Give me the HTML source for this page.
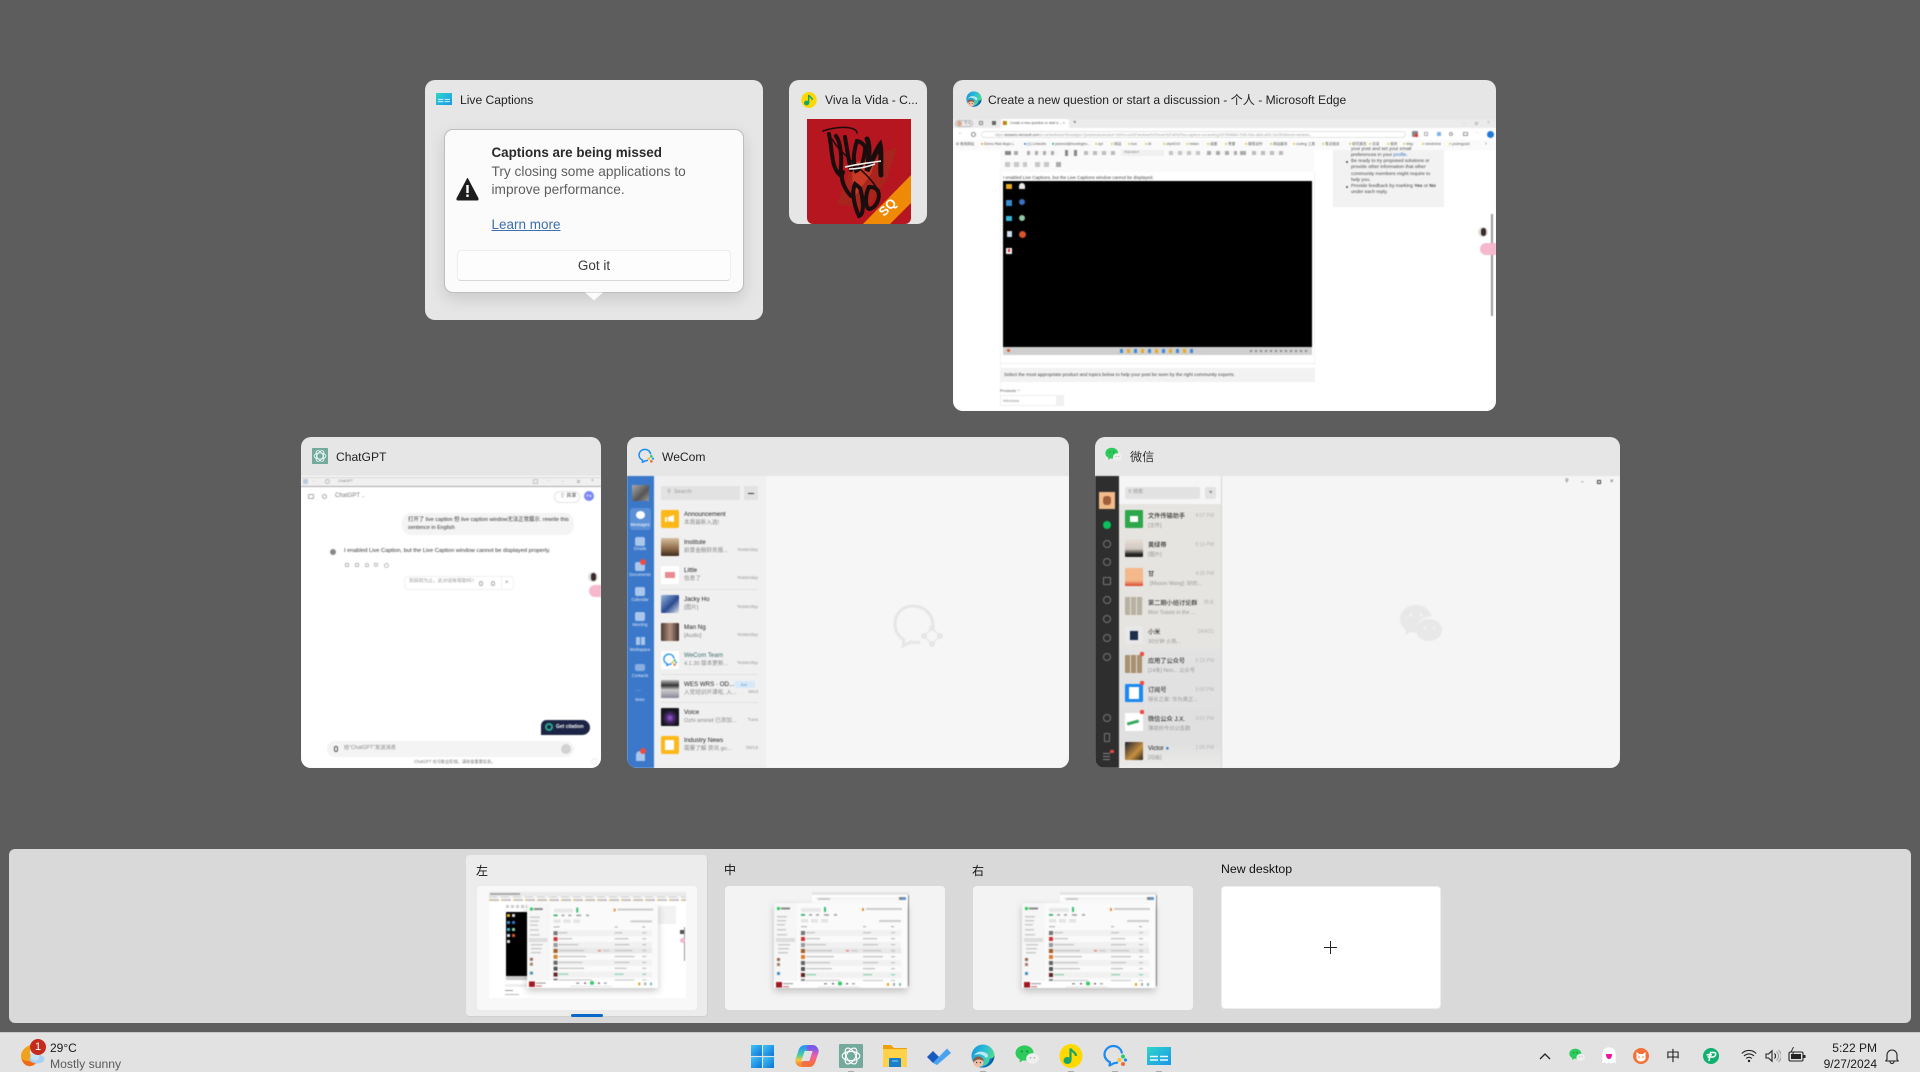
<!DOCTYPE html>
<html><head><meta charset="utf-8"><title>Task View</title>
<style>
html,body{margin:0;padding:0;width:1920px;height:1072px;overflow:hidden;background:#5d5d5d}
*{box-sizing:border-box}
body{font-family:"Liberation Sans","Noto Sans CJK SC",sans-serif;color:#111;position:relative}
.a,.t{position:absolute}
.t{white-space:nowrap;line-height:1}
.card{position:absolute;background:#e6e6e6;border-radius:10px;overflow:hidden}
.in{position:absolute;width:1920px;height:1072px}
.b{filter:blur(.42px)}
.ti{font-size:12.1px;color:#222;top:94px}
.ti2{font-size:12.1px;color:#222;top:451px}
.g{background:#c9c9c9}
.e{font-size:3.6px;color:#555}
.wn{font-size:6.2px;color:#222}
.ws{font-size:5.6px;color:#888}
.wt{font-size:4.8px;color:#999}
.wl{font-size:4.2px;color:#dfe9f7;width:24px;left:628px;text-align:center}
.wi{position:absolute;left:635px;width:10px;height:9px;background:#a9c6ec;border-radius:2px}
.av{position:absolute;width:18px;height:18px;border-radius:1px}
.xn{font-size:6.2px;color:#111;left:1148px}
.xs{font-size:5.3px;color:#999;left:1148px}
.xt{font-size:5px;color:#b5b5b5}
.xi{position:absolute;left:1103px;width:8px;height:8px;border:1px solid #777;border-radius:50%}
.rd{position:absolute;width:4px;height:4px;background:#f04a42;border-radius:1px}
.thumb{position:absolute;top:886px;height:124px;background:#f3f3f3;border-radius:4px;overflow:hidden}
.pip{position:absolute;top:1071px;width:6px;height:1px;background:#aaa}
</style></head><body>

<svg width="0" height="0" style="position:absolute">
<defs>
<linearGradient id="gwin" x1="0" y1="0" x2="1" y2="1"><stop offset="0" stop-color="#42c4f8"/><stop offset="1" stop-color="#0b74d6"/></linearGradient>
<linearGradient id="gcap" x1="0" y1="0" x2="1" y2="1"><stop offset="0" stop-color="#2fd6c8"/><stop offset="1" stop-color="#1a96ea"/></linearGradient>
<linearGradient id="gedge" x1="0" y1="0" x2="1" y2=".4"><stop offset="0" stop-color="#1590d8"/><stop offset=".55" stop-color="#2bbcd8"/><stop offset="1" stop-color="#4fdb8e"/></linearGradient>
<linearGradient id="gcl" x1="0" y1="0" x2="0" y2="1"><stop offset="0" stop-color="#2a9cf0"/><stop offset=".45" stop-color="#4ccf9a"/><stop offset=".75" stop-color="#f5c83c"/><stop offset="1" stop-color="#f58a34"/></linearGradient>
<linearGradient id="gcr" x1="0" y1="1" x2="0" y2="0"><stop offset="0" stop-color="#f5703a"/><stop offset=".5" stop-color="#ee5fa8"/><stop offset="1" stop-color="#7d58ec"/></linearGradient>
</defs>
<symbol id="i-win" viewBox="0 0 24 24"><rect x="0" y="0" width="11.4" height="11.4" fill="url(#gwin)"/><rect x="12.6" y="0" width="11.4" height="11.4" fill="url(#gwin)"/><rect x="0" y="12.6" width="11.4" height="11.4" fill="url(#gwin)"/><rect x="12.6" y="12.6" width="11.4" height="11.4" fill="url(#gwin)"/></symbol>
<symbol id="i-cap" viewBox="0 0 24 18"><rect width="24" height="18" fill="url(#gcap)"/><path d="M3 9.500h8M13 9.500h8M3 13h8M13 13h8" stroke="#e8fbff" stroke-width="1.400"/></symbol>
<symbol id="i-gpt" viewBox="0 0 24 24"><rect width="24" height="24" rx="1" fill="#74aa9c"/><g fill="none" stroke="#fff" stroke-width="1.100"><ellipse cx="12" cy="12" rx="8.800" ry="4.600"/><ellipse cx="12" cy="12" rx="8.800" ry="4.600" transform="rotate(60 12 12)"/><ellipse cx="12" cy="12" rx="8.800" ry="4.600" transform="rotate(120 12 12)"/></g></symbol>
<symbol id="i-edge" viewBox="0 0 24 24"><circle cx="12" cy="12" r="11.500" fill="url(#gedge)"/><path d="M3 11.500C5 8 9 7 12.500 8 15.500 8.800 17.500 10.500 17 12.500 16.500 14 14.500 14 13.500 12.500 11 9.800 6 9.500 3 11.500z" fill="#b8e8f0"/><path d="M23.500 11C23.500 18 18 23.500 11.500 23.500 9.500 23.500 8 23 8 23 14 23 18.500 19.500 19 14.500 21 15 23 13.500 23.500 11z" fill="#0c4f9e"/><path d="M19 14.500C18.500 19.500 14 23 8 23 10 23.800 15 24 18.500 20.500 20.500 18.500 21 16 21 14.800z" fill="#1368c4"/><circle cx="7.500" cy="18" r="5.200" fill="#eebda8"/><path d="M2.300 18.500C2 13.500 5.500 12.500 7.500 12.500 10.500 12.500 13 15 12.700 17.500 11 16 10 15.500 7.500 15.500 5 15.500 3.800 17 2.300 18.500z" fill="#8a5c48"/><circle cx="5.600" cy="18.500" r=".7" fill="#442"/><circle cx="9.400" cy="18.500" r=".7" fill="#442"/></symbol>
<symbol id="i-wx" viewBox="0 0 24 24"><ellipse cx="9.500" cy="10" rx="9" ry="7.600" fill="#2ecb5c"/><path d="M5 15.500l-.5 4 4-2.500z" fill="#2ecb5c"/><circle cx="6.800" cy="8.500" r="1" fill="#148a3a"/><circle cx="12.200" cy="8.500" r="1" fill="#148a3a"/><ellipse cx="17.500" cy="15.500" rx="6.300" ry="5.300" fill="#efefef"/><circle cx="15.500" cy="14.800" r=".8" fill="#aaa"/><circle cx="19.500" cy="14.800" r=".8" fill="#aaa"/></symbol>
<symbol id="i-qq" viewBox="0 0 24 24"><ellipse cx="12" cy="12" rx="11.500" ry="12" fill="#ffd800"/><path d="M11.500 16V4.500c.8 3 5.500 3.500 5.500 7.500" fill="none" stroke="#17a56c" stroke-width="2.200"/><ellipse cx="8.500" cy="16.500" rx="4" ry="3.500" fill="#17a56c"/></symbol>
<symbol id="i-wc" viewBox="0 0 24 24"><path d="M19 9.500C18.500 5 14.500 2 10.500 2 5.500 2 1.500 5.800 1.500 10.500c0 3.500 2.500 6.500 5.500 7.700l-.5 3.300 4.500-2.300c1.500 0 2.500-.2 4-.9" fill="none" stroke="#1b8cf2" stroke-width="2.200" stroke-linejoin="round"/><circle cx="20" cy="12.500" r="2" fill="#2cc86f"/><circle cx="22.500" cy="16" r="1.600" fill="#1b8cf2"/><circle cx="20" cy="20" r="2" fill="#f46b26"/><circle cx="16.500" cy="16" r="2" fill="#f9c22d"/></symbol>
<symbol id="i-todo" viewBox="0 0 24 18"><path d="M0 10L6 4l6 6-6 6z" fill="#185abd"/><path d="M6 16L20 1.500 24 6 10 18z" fill="#4ba3f0"/></symbol>
<symbol id="i-folder" viewBox="0 0 24 22"><path d="M0 0h8l3 3h13v6H0z" fill="#ef9f0a"/><path d="M0 4h24v18H0z" fill="#ffd24a"/><path d="M7 13h10a1 1 0 0 1 1 1v8H6v-8a1 1 0 0 1 1-1z" fill="#1a7fca"/><path d="M9 16h6" stroke="#8fd0f7" stroke-width="1"/></symbol>
<symbol id="i-cop" viewBox="0 0 24 24"><path d="M15 4H10C8 4 7 5.500 6.500 7L3.500 16C3 18 4.500 20 6.500 20H10" fill="none" stroke="url(#gcl)" stroke-width="6" stroke-linecap="round"/><path d="M9.500 20H14C16 20 17 18.500 17.500 17L20.500 8C21 6 19.500 4 17.500 4H14.500" fill="none" stroke="url(#gcr)" stroke-width="6" stroke-linecap="round"/></symbol>
<symbol id="mini" viewBox="0 0 133 85">
<rect width="133" height="85" fill="#fafafa"/><rect width="23" height="78" fill="#f6f6f6"/>
<rect x="3" y="4" width="3" height="3" fill="#2ecb5c"/><rect x="7" y="4.500" width="9" height="2" fill="#888"/>
<g fill="#ccc"><rect x="3" y="13" width="10" height="1.500"/><rect x="3" y="17" width="9" height="1.500"/><rect x="3" y="21" width="8" height="1.500"/><rect x="3" y="26" width="9" height="1.500"/><rect x="3" y="31" width="10" height="1.500"/></g>
<rect x="2" y="35" width="19" height="4" fill="#ddd"/><g fill="#ccc"><rect x="4" y="41" width="12" height="1.500"/><rect x="4" y="45" width="11" height="1.500"/><rect x="4" y="49" width="10" height="1.500"/></g>
<rect x="3" y="55" width="3" height="3" fill="#9a6a4c"/><rect x="3" y="60" width="3" height="3" fill="#a9806a"/><rect x="3" y="69" width="3" height="3" fill="#4a90b8"/>
<rect x="27" y="5" width="20" height="4" rx="2" fill="#e8e8e8"/><rect x="50" y="4" width="2" height="5" fill="#38c070"/>
<rect x="88" y="5" width="2" height="3" fill="#e8913c"/><rect x="92" y="5" width="36" height="2" fill="#ccc"/>
<rect x="27" y="11" width="4" height="1.800" fill="#38b070"/><g fill="#aaa"><rect x="35" y="11" width="3" height="1.800"/><rect x="42" y="11" width="3" height="1.800"/><rect x="50" y="11" width="5" height="1.800"/><rect x="60" y="11" width="3" height="1.800"/></g>
<g fill="#e4e4e4"><rect x="27" y="16" width="7" height="3.500"/><rect x="37" y="16" width="7" height="3.500"/><rect x="47" y="16" width="7" height="3.500"/></g><rect x="105" y="17" width="22" height="2" fill="#ccc"/>
<rect x="27" y="23" width="6" height="1.300" fill="#bbb"/><rect x="89" y="23" width="3" height="1.300" fill="#bbb"/><rect x="117" y="23" width="3" height="1.300" fill="#bbb"/>
<g fill="#f1f1f1"><rect x="26" y="27" width="101" height="6"/><rect x="26" y="39" width="101" height="6"/><rect x="26" y="45" width="101" height="5.500" fill="#e9e9e9"/><rect x="26" y="57" width="101" height="6"/><rect x="26" y="69" width="101" height="6"/></g>
<rect x="27" y="28" width="4" height="4" fill="#777"/><rect x="27" y="34" width="4" height="4" fill="#c33"/><rect x="27" y="40" width="4" height="4" fill="#999"/><rect x="27" y="46" width="4" height="4" fill="#a55a2a"/><rect x="27" y="52" width="4" height="4" fill="#d88030"/><rect x="27" y="58" width="4" height="4" fill="#666"/><rect x="27" y="64" width="4" height="4" fill="#555"/><rect x="27" y="70" width="4" height="4" fill="#622"/><rect x="27" y="76" width="4" height="3" fill="#888"/>
<g fill="#c4c4c4"><rect x="32" y="29" width="9" height="1.300"/><rect x="32" y="35" width="14" height="1.300"/><rect x="32" y="41" width="20" height="1.300"/><rect x="32" y="47" width="26" height="1.300"/><rect x="32" y="53" width="28" height="1.300"/><rect x="32" y="59" width="24" height="1.300"/><rect x="32" y="65" width="26" height="1.300"/><rect x="32" y="71" width="10" height="1.300" fill="#8cd4b0"/><rect x="32" y="77" width="34" height="1.300"/>
<rect x="89" y="29" width="8" height="1.300"/><rect x="89" y="35" width="14" height="1.300"/><rect x="89" y="41" width="15" height="1.300"/><rect x="89" y="47" width="18" height="1.300"/><rect x="89" y="53" width="20" height="1.300"/><rect x="89" y="59" width="15" height="1.300"/><rect x="89" y="65" width="12" height="1.300"/><rect x="89" y="71" width="9" height="1.300" fill="#8cd4b0"/><rect x="89" y="77" width="20" height="1.300"/>
<rect x="117" y="29" width="4" height="1.300"/><rect x="117" y="35" width="4" height="1.300"/><rect x="117" y="41" width="4" height="1.300"/><rect x="117" y="47" width="4" height="1.300"/><rect x="117" y="53" width="4" height="1.300"/><rect x="117" y="59" width="4" height="1.300"/><rect x="117" y="65" width="4" height="1.300"/><rect x="117" y="71" width="4" height="1.300" fill="#8cd4b0"/><rect x="117" y="77" width="4" height="1.300"/></g>
<rect x="72" y="47" width="3" height="1.500" fill="#ea8080"/><rect x="77" y="47" width="7" height="1.500" fill="#ccc"/>
<rect y="78" width="133" height="7" fill="#fff"/><rect x="2" y="79" width="6" height="5.500" fill="#a01820"/><rect x="9" y="80" width="10" height="1.300" fill="#aaa"/><rect x="9" y="83" width="6" height="1.300" fill="#c88"/>
<circle cx="66" cy="80.500" r="2" fill="#2ecb5c"/><rect x="50" y="80" width="3" height="1.500" fill="#999"/><rect x="58" y="80" width="2" height="1.500" fill="#666"/><rect x="72" y="80" width="2" height="1.500" fill="#666"/><rect x="78" y="80" width="3" height="1.500" fill="#aaa"/><rect x="44" y="83.500" width="42" height=".8" fill="#ddd"/>
<rect x="113" y="80" width="2" height="3" fill="#e8a020"/><rect x="119" y="80" width="2" height="3" fill="#aaa"/><rect x="125" y="80" width="2" height="3" fill="#7ba"/>
</symbol>
</svg>

<!-- Live Captions -->
<div class="card" style="left:425px;top:80px;width:338px;height:240px"><div class="in" style="left:-425px;top:-80px">
<svg class="a" style="left:436px;top:93px" width="16" height="12"><use href="#i-cap"/></svg>
<div class="t ti" style="left:460px">Live Captions</div>
<div class="a" style="left:444px;top:129px;width:300px;height:164px;background:#fbfbfb;border:1px solid #bdbdbd;border-radius:9px;box-shadow:0 6px 16px rgba(0,0,0,.13)"></div>
<svg class="a" style="left:585px;top:292px" width="18" height="9"><path d="M0 .5L9 8.500 18 .5z" fill="#fbfbfb"/></svg>
<svg class="a" style="left:456px;top:177px" width="23" height="24" viewBox="0 0 23 24"><path d="M11.500 1.500L22 21.500a1 1 0 0 1-1 1.500H2a1 1 0 0 1-1-1.500z" fill="#1c1c1c" stroke="#1c1c1c" stroke-linejoin="round"/><rect x="10.300" y="8" width="2.400" height="8" fill="#fff"/><rect x="10.300" y="17.500" width="2.400" height="2.400" fill="#fff"/></svg>
<div class="t" style="left:491.500px;top:145.500px;font-size:13.400px;font-weight:bold;color:#2a2a2a">Captions are being missed</div>
<div class="t" style="left:491.500px;top:165px;font-size:13.700px;color:#5e5e5e">Try closing some applications to</div>
<div class="t" style="left:491.500px;top:183px;font-size:13.700px;color:#5e5e5e">improve performance.</div>
<div class="t" style="left:491.500px;top:218px;font-size:13.500px;color:#3d6ead;text-decoration:underline">Learn more</div>
<div class="a" style="left:457px;top:250px;width:274px;height:31px;background:#fdfdfd;border:1px solid #ededed;border-bottom-color:#d8d8d8;border-radius:4px;text-align:center;font-size:13.500px;line-height:29px;color:#3a3a3a">Got it</div>
</div></div>

<!-- Viva -->
<div class="card" style="left:789px;top:80px;width:138px;height:144px"><div class="in" style="left:-789px;top:-80px">
<svg class="a" style="left:801px;top:92px" width="16" height="16"><use href="#i-qq"/></svg>
<div class="t ti" style="left:825px">Viva la Vida - C...</div>
<svg class="a" style="left:807px;top:119px;border-radius:0 0 6px 6px" width="104" height="105" viewBox="0 0 104 105">
<rect width="104" height="105" fill="#b5161f"/>
<path d="M45 45L90 28 80 60 60 90 30 85z" fill="#a8241c"/><path d="M45 45l25-10-6 20-18 25z" fill="#c83a26"/>
<g fill="none" stroke="#1a0d0d" stroke-linecap="round"><path d="M22 15C26 35 24 48 33 56 36 38 33 22 29 17" stroke-width="4"/><path d="M38 18c2 12 4 26 6 33M50 22c-4 12-4 22-1 30 5-2 9-12 9-24-2-4-6-6-8-6z" stroke-width="4"/><path d="M60 20c3 6 2 20 0 32 5-10 10-22 13-26 2 8 0 22 1 30" stroke-width="5"/><path d="M36 53c-4 8 4 20 8 24M48 65c-4 8 0 24 4 32 6-2 4-18 1-28zM62 68c-4 8-4 20 0 22 6 0 12-10 9-18-3-4-6-4-9-4z" stroke-width="4"/><path d="M16 12c18-6 34-4 34 2M25 20c10 18 40 36 46 52" stroke-width="1.500"/></g>
<path d="M38 48c12-3 24-4 36-6M42 50c8 0 18-2 26-5" stroke="#eee" stroke-width="1.600" fill="none"/>
<polygon points="104,56 104,84 83,105 56,105" fill="#ef8a06"/>
<text x="0" y="0" transform="translate(77 98) rotate(-45)" font-family="Liberation Sans" font-weight="bold" font-size="13" fill="#fff">SQ</text>
</svg>
</div></div>

<!-- Edge -->
<div class="card" style="left:953px;top:80px;width:543px;height:331px"><div class="in" style="left:-953px;top:-80px">
<svg class="a" style="left:966px;top:91px" width="16" height="16"><use href="#i-edge"/></svg>
<div class="t ti" style="left:988px">Create a new question or start a discussion - 个人 - Microsoft Edge</div>
<div class="b">
<div class="a" style="left:953px;top:119px;width:543px;height:292px;background:#fff"></div>
<div class="a" style="left:953px;top:119px;width:543px;height:9px;background:#ebebeb"></div>
<div class="a" style="left:955px;top:120px;width:18px;height:7px;border:1px solid #bbb;border-radius:4px"></div>
<div class="a" style="left:957px;top:121px;width:5px;height:5px;background:#d9a58e;border-radius:50%"></div><div class="t e" style="left:964px;top:122px">个人</div>
<div class="a" style="left:979px;top:121px;width:4px;height:4px;border:1px solid #888"></div><div class="a" style="left:992px;top:121px;width:4px;height:4px;background:#666"></div>
<div class="a" style="left:1001px;top:119px;width:68px;height:9px;background:#fff;border-radius:2px 2px 0 0"></div>
<div class="a" style="left:1003px;top:121px;width:4px;height:4px;background:linear-gradient(90deg,#f25022 50%,#7fba00 50%)"></div>
<div class="t e" style="left:1010px;top:122px;font-size:3.400px">Create a new question or start a ... ×</div>
<div class="t" style="left:1073px;top:120px;font-size:6px;color:#555">+</div>
<div class="t" style="left:1463px;top:121px;font-size:4px;color:#aaa">–</div><div class="a" style="left:1475px;top:122px;width:3px;height:3px;border:1px solid #bbb"></div><div class="t" style="left:1487px;top:121px;font-size:5px;color:#aaa">×</div>
<div class="a" style="left:953px;top:128px;width:543px;height:12px;background:#fff"></div>
<div class="t" style="left:958px;top:131px;font-size:5px;color:#555">←</div>
<div class="a" style="left:971px;top:132px;width:5px;height:5px;border:1px solid #888;border-radius:50%"></div>
<div class="a" style="left:981px;top:131px;width:425px;height:7px;border:1px solid #e2e2e2;border-radius:4px;background:#fff;overflow:hidden"><div class="t" style="left:13px;top:1.500px;font-size:3.300px;color:#999">https://<span style="color:#444">answers.microsoft.com</span>/en-us/newthread?threadtype=Questions&amp;cancelurl=%2Fen-us%2Fwindows%2Fforum%2Fall%2Flive-captions-not-working%2F9548864-7b95-43dc-a8c6-a9917cb23f1f&amp;forum=windows...</div></div>
<div class="a" style="left:1412px;top:131px;width:6px;height:6px;background:#888;border-radius:1px"></div><div class="a" style="left:1415px;top:134px;width:3px;height:3px;background:#e33"></div>
<div class="a" style="left:1424px;top:132px;width:4px;height:4px;border:1px solid #aaa"></div><div class="a" style="left:1437px;top:132px;width:4px;height:4px;background:#7ab4e8"></div><div class="a" style="left:1449px;top:132px;width:4px;height:4px;border:1px solid #999;border-radius:50%"></div><div class="a" style="left:1463px;top:132px;width:5px;height:4px;border:1px solid #999"></div><div class="t e" style="left:1476px;top:131px">...</div>
<div class="a" style="left:1487px;top:131px;width:7px;height:7px;border-radius:50%;background:#2179d8"></div>
<div class="a" style="left:953px;top:140px;width:543px;height:10px;background:#fafafa"></div>
<div class="t e" style="left:956px;top:143px">⊞ 常用网址</div><div class="t e" style="left:981px;top:143px"><span style="color:#e0a020">■</span> Demo Risk Bays L.</div><div class="t e" style="left:1024px;top:143px"><span style="color:#3a7ac8">■</span> (1) LinkedIn</div><div class="t e" style="left:1052px;top:143px"><span style="color:#3aa050">■</span> pwencd@bootingtro...</div><div class="t e" style="left:1095px;top:143px"><span style="color:#e8c050">■</span> epi</div><div class="t e" style="left:1111px;top:143px"><span style="color:#e8c050">■</span> 网站</div><div class="t e" style="left:1128px;top:143px"><span style="color:#e8c050">■</span> box</div><div class="t e" style="left:1145px;top:143px"><span style="color:#e8c050">■</span> AI</div><div class="t e" style="left:1163px;top:143px"><span style="color:#e8c050">■</span> clip4OOI</div><div class="t e" style="left:1186px;top:143px"><span style="color:#e8c050">■</span> miden</div><div class="t e" style="left:1207px;top:143px"><span style="color:#e8c050">■</span> 成都</div><div class="t e" style="left:1225px;top:143px"><span style="color:#e8c050">■</span> 青春</div><div class="t e" style="left:1245px;top:143px"><span style="color:#e8c050">■</span> 随笔创作</div><div class="t e" style="left:1270px;top:143px"><span style="color:#e8c050">■</span> 网站副本</div><div class="t e" style="left:1293px;top:143px"><span style="color:#e8c050">■</span> coding 工具</div><div class="t e" style="left:1322px;top:143px"><span style="color:#e8c050">■</span> 笔试相关</div><div class="t e" style="left:1349px;top:143px"><span style="color:#e8c050">■</span> 研究报告</div><div class="t e" style="left:1369px;top:143px"><span style="color:#e8c050">■</span> 目录</div><div class="t e" style="left:1387px;top:143px"><span style="color:#e8c050">■</span> 我的</div><div class="t e" style="left:1403px;top:143px"><span style="color:#e8c050">■</span> Way</div><div class="t e" style="left:1422px;top:143px"><span style="color:#e8c050">■</span> mindmind</div><div class="t e" style="left:1449px;top:143px"><span style="color:#e8c050">■</span> podmgclub</div><div class="t" style="left:1485px;top:142px;font-size:5px;color:#555">›</div>
<div class="a" style="left:1000px;top:150px;width:314px;height:22px;background:#fafafa"></div>
<div class="a" style="left:1005px;top:151px;width:6px;height:4px;background:#888"></div><div class="a" style="left:1014px;top:151px;width:4px;height:4px;background:#aaa"></div>
<div class="a" style="left:1027px;top:151px;width:32px;height:4px;background:repeating-linear-gradient(90deg,#aaa 0 3px,#f6f6f6 3px 8px)"></div><div class="a" style="left:1065px;top:150px;width:14px;height:6px;background:repeating-linear-gradient(90deg,#888 0 3px,#f6f6f6 3px 9px)"></div>
<div class="a" style="left:1084px;top:151px;width:32px;height:4px;background:repeating-linear-gradient(90deg,#bbb 0 4px,#f6f6f6 4px 9px)"></div>
<div class="a" style="left:1121px;top:150px;width:43px;height:6px;background:#f0f0f0"></div><div class="t e" style="left:1124px;top:151px;color:#888">Standard</div>
<div class="a" style="left:1169px;top:151px;width:32px;height:4px;background:repeating-linear-gradient(90deg,#c4c4c4 0 4px,#f6f6f6 4px 9px)"></div>
<div class="a" style="left:1207px;top:151px;width:30px;height:4px;background:repeating-linear-gradient(90deg,#aaa 0 4px,#f6f6f6 4px 9px)"></div>
<div class="a" style="left:1240px;top:151px;width:6px;height:4px;background:#aaa"></div>
<div class="a" style="left:1252px;top:151px;width:32px;height:4px;background:repeating-linear-gradient(90deg,#bbb 0 4px,#f6f6f6 4px 9px)"></div>
<div class="a" style="left:1005px;top:162px;width:22px;height:5px;background:repeating-linear-gradient(90deg,#c8c8c8 0 5px,#f6f6f6 5px 9px)"></div><div class="a" style="left:1035px;top:162px;width:16px;height:5px;background:repeating-linear-gradient(90deg,#c8c8c8 0 5px,#f6f6f6 5px 9px)"></div><div class="a" style="left:1056px;top:162px;width:5px;height:5px;background:#aaa"></div>
<div class="t" style="left:1003px;top:176px;font-size:4.500px;color:#444">I enabled Live Captions, but the Live Captions window cannot be displayed.</div>
<div class="a" style="left:1003px;top:181px;width:309px;height:166px;background:#000"></div>
<div class="a" style="left:1006px;top:184px;width:6px;height:5px;background:#e8a820"></div><div class="a" style="left:1019px;top:183px;width:6px;height:6px;background:#e8e8e8;border-radius:50% 50% 0 0"></div>
<div class="a" style="left:1006px;top:200px;width:6px;height:6px;background:#3a8ad0"></div><div class="a" style="left:1019px;top:199px;width:6px;height:6px;background:#3a70c0;border-radius:50%"></div>
<div class="a" style="left:1006px;top:216px;width:6px;height:5px;background:#38b4d8"></div><div class="a" style="left:1019px;top:215px;width:6px;height:6px;background:#90c8a0;border-radius:50%"></div>
<div class="a" style="left:1007px;top:231px;width:5px;height:6px;background:#cde"></div><div class="a" style="left:1019px;top:231px;width:7px;height:7px;background:#d8552a;border-radius:50%"></div>
<div class="a" style="left:1006px;top:248px;width:6px;height:6px;background:#f4f4f4"></div><div class="a" style="left:1008px;top:249px;width:2px;height:3px;background:#d22"></div>
<div class="a" style="left:1003px;top:347px;width:309px;height:8px;background:#cfcfcf"></div><div class="a" style="left:1007px;top:349px;width:3px;height:3px;background:#d8552a;border-radius:50%"></div>
<div class="a" style="left:1120px;top:349px;width:75px;height:4px;background:repeating-linear-gradient(90deg,#3a8ad0 0 3px,#cfcfcf 3px 7px,#e8a820 7px 10px,#cfcfcf 10px 14px)"></div><div class="a" style="left:1250px;top:350px;width:58px;height:2px;background:repeating-linear-gradient(90deg,#888 0 2px,#cfcfcf 2px 5px)"></div>
<div class="a" style="left:1000px;top:172px;width:1px;height:222px;background:#f3f3f3"></div><div class="a" style="left:1314px;top:172px;width:1px;height:193px;background:#f3f3f3"></div><div class="a" style="left:1000px;top:363px;width:315px;height:1px;background:#f0f0f0"></div>
<div class="a" style="left:1000px;top:368px;width:315px;height:14px;background:#f2f2f2"></div>
<div class="t" style="left:1004px;top:373px;font-size:4.700px;color:#444">Select the most appropriate product and topics below to help your post be seen by the right community experts.</div>
<div class="t e" style="left:1000px;top:389px;font-size:4px">Products: <span style="color:#c33">*</span></div>
<div class="a" style="left:1000px;top:395px;width:64px;height:11px;border:1px solid #eee"></div><div class="t e" style="left:1003px;top:399px;font-size:4px;color:#888">Windows</div><div class="a" style="left:1056px;top:395px;width:8px;height:11px;background:#f0f0f0"></div>
<div class="a" style="left:1333px;top:150px;width:111px;height:57px;background:#f2f2f2"></div>
<div class="t" style="left:1351px;top:148px;font-size:4.800px;color:#444">your post and set your email</div>
<div class="t" style="left:1351px;top:154px;font-size:4.800px;color:#444">preferences in your <span style="color:#2a70c0">profile</span>.</div>
<div class="t" style="left:1351px;top:160px;font-size:4.800px;color:#444">Be ready to try proposed solutions or</div>
<div class="t" style="left:1351px;top:166px;font-size:4.800px;color:#444">provide other information that other</div>
<div class="t" style="left:1351px;top:173px;font-size:4.800px;color:#444">community members might require to</div>
<div class="t" style="left:1351px;top:179px;font-size:4.800px;color:#444">help you.</div>
<div class="t" style="left:1351px;top:185px;font-size:4.800px;color:#444">Provide feedback by marking <b>Yes</b> or <b>No</b></div>
<div class="t" style="left:1351px;top:191px;font-size:4.800px;color:#444">under each reply.</div>
<div class="a" style="left:1346px;top:161px;width:2px;height:2px;background:#444;border-radius:50%"></div><div class="a" style="left:1346px;top:186px;width:2px;height:2px;background:#444;border-radius:50%"></div>
<div class="a" style="left:1491px;top:214px;width:2px;height:102px;background:#999"></div>
<div class="a" style="left:1478px;top:227px;width:10px;height:10px;border-radius:50%;background:#ddd"></div><div class="a" style="left:1481px;top:228px;width:5px;height:8px;border-radius:3px;background:#3a2a28"></div>
<div class="a" style="left:1480px;top:243px;width:16px;height:12px;border-radius:6px 0 0 6px;background:#f5b8cc"></div>
</div>
</div></div>

<!-- ChatGPT -->
<div class="card" style="left:301px;top:437px;width:300px;height:331px"><div class="in" style="left:-301px;top:-437px">
<svg class="a" style="left:312px;top:448px" width="16" height="16"><use href="#i-gpt"/></svg>
<div class="t ti2" style="left:336px">ChatGPT</div>
<div class="b">
<div class="a" style="left:301px;top:476px;width:300px;height:292px;background:#fff"></div>
<div class="a" style="left:301px;top:477px;width:300px;height:10px;background:#f0f0f0;border-bottom:1px solid #aaa;border-top:1px solid #d5d5d5"></div>
<div class="a" style="left:303px;top:479px;width:5px;height:5px;background:#bcd"></div><div class="t" style="left:312px;top:479px;font-size:5px;color:#aaa">←</div><div class="a" style="left:325px;top:479px;width:5px;height:5px;border:1px solid #bbb;border-radius:50%"></div><div class="t" style="left:338px;top:480px;font-size:3.600px;color:#888">ChatGPT</div>
<div class="a" style="left:533px;top:479px;width:5px;height:5px;border:1px solid #c4c4c4"></div><div class="t" style="left:547px;top:480px;font-size:3.600px;color:#999">···</div><div class="t" style="left:562px;top:480px;font-size:3.600px;color:#999">–</div><div class="a" style="left:577px;top:480px;width:3px;height:3px;border:1px solid #bbb"></div><div class="t" style="left:591px;top:479px;font-size:5px;color:#999">×</div>
<div class="a" style="left:308px;top:494px;width:6px;height:5px;border:1px solid #aaa;border-radius:1px"></div>
<div class="a" style="left:322px;top:494px;width:5px;height:5px;border:1px solid #aaa;border-radius:50%"></div>
<div class="t" style="left:335px;top:493px;font-size:6px;color:#777">ChatGPT <span style="font-size:4px">⌄</span></div>
<div class="a" style="left:554px;top:491px;width:26px;height:12px;border:1px solid #e4e4e4;border-radius:6px;background:#fff"></div><div class="t" style="left:560px;top:494px;font-size:5px;color:#333">⇧ 共享</div>
<div class="a" style="left:584px;top:491px;width:10px;height:10px;border-radius:50%;background:#7c88f5;color:#fff;font-size:4px;line-height:10px;text-align:center">Pw</div>
<div class="a" style="left:402px;top:513px;width:172px;height:22px;border-radius:9px;background:#f4f4f4"></div>
<div class="t" style="left:408px;top:518px;font-size:5.400px;color:#333">打开了 live caption 但 live caption window无法正常展示. rewrite this</div>
<div class="t" style="left:408px;top:526px;font-size:5.400px;color:#333">sentence in English</div>
<div class="a" style="left:330px;top:549px;width:6px;height:6px;border-radius:50%;background:#888"></div>
<div class="t" style="left:344px;top:549px;font-size:5.700px;color:#333">I enabled Live Caption, but the Live Caption window cannot be displayed properly.</div>
<div class="a" style="left:345px;top:563px;width:4px;height:4px;border:1px solid #bbb"></div><div class="a" style="left:355px;top:563px;width:4px;height:4px;border:1px solid #bbb"></div><div class="a" style="left:365px;top:563px;width:4px;height:4px;border:1px solid #bbb;border-radius:50% 50% 0 0"></div><div class="a" style="left:374px;top:563px;width:4px;height:4px;border:1px solid #bbb;border-radius:0 0 50% 50%"></div><div class="a" style="left:384px;top:563px;width:5px;height:5px;border:1px solid #bbb;border-radius:50%"></div>
<div class="a" style="left:404px;top:576px;width:110px;height:14px;border:1px solid #f0f0f0;border-radius:4px;background:#fff"></div>
<div class="t" style="left:409px;top:580px;font-size:4.800px;color:#999">到目前为止，此对话有帮助吗?</div>
<div class="a" style="left:479px;top:581px;width:4px;height:5px;border:1px solid #aaa;border-radius:2px"></div><div class="a" style="left:491px;top:581px;width:4px;height:5px;border:1px solid #aaa;border-radius:2px"></div><div class="a" style="left:501px;top:576px;width:1px;height:14px;background:#f0f0f0"></div><div class="t" style="left:505px;top:580px;font-size:6px;color:#888">×</div>
<div class="a" style="left:588px;top:572px;width:10px;height:10px;border-radius:50%;background:#ddd"></div><div class="a" style="left:591px;top:573px;width:5px;height:8px;border-radius:3px;background:#3a2a28"></div>
<div class="a" style="left:589px;top:585px;width:12px;height:12px;border-radius:6px 0 0 6px;background:#f5b8cc"></div>
<div class="a" style="left:541px;top:720px;width:49px;height:15px;border-radius:6px 8px 8px 0;background:#1c2545"></div>
<div class="a" style="left:545px;top:723px;width:8px;height:8px;border-radius:50%;border:2px solid #27a88a"></div>
<div class="t" style="left:556px;top:725px;font-size:5px;color:#fff;font-weight:bold">Get citation</div>
<div class="a" style="left:327px;top:741px;width:247px;height:16px;border-radius:8px;background:#f4f4f4"></div>
<div class="a" style="left:334px;top:746px;width:4px;height:6px;border:1px solid #555;border-radius:2px"></div>
<div class="t" style="left:344px;top:746px;font-size:5.300px;color:#888">给“ChatGPT”发送消息</div>
<div class="a" style="left:561px;top:744px;width:10px;height:10px;border-radius:50%;background:#d2d2d2"></div>
<div class="t" style="left:414px;top:760px;font-size:4.200px;color:#777">ChatGPT 也可能会犯错。请核查重要信息。</div>
<div class="a" style="left:591px;top:758px;width:7px;height:7px;border-radius:50%;border:1px solid #eee"></div>
</div>
</div></div>

<!-- WeCom -->
<div class="card" style="left:627px;top:437px;width:442px;height:331px"><div class="in" style="left:-627px;top:-437px">
<svg class="a" style="left:638px;top:448px" width="16" height="16"><use href="#i-wc"/></svg>
<div class="t ti2" style="left:662px">WeCom</div>
<div class="b">
<div class="a" style="left:766px;top:476px;width:303px;height:292px;background:#f6f6f6"></div>
<div class="a" style="left:654px;top:476px;width:112px;height:292px;background:#f0f0f0"></div>
<div class="a" style="left:627px;top:476px;width:27px;height:292px;background:#3b78c9"></div>
<div class="a" style="left:632px;top:485px;width:17px;height:16px;background:linear-gradient(135deg,#aaa,#555 60%,#999)"></div>
<div class="a" style="left:630px;top:508px;width:21px;height:22px;border-radius:3px;background:#5b90d6"></div>
<div class="a" style="left:636px;top:511px;width:9px;height:8px;border-radius:50%;background:#fff"></div>
<div class="t wl" style="top:523px;color:#fff">Messages</div>
<div class="wi" style="top:537px"></div><div class="t wl" style="top:547px">Emails</div>
<div class="wi" style="top:562px"></div><div class="t wl" style="top:573px">Documents</div>
<div class="a" style="left:640px;top:559px;width:6px;height:6px;border-radius:50%;background:#ef4a42"></div>
<div class="wi" style="top:587px"></div><div class="t wl" style="top:598px">Calendar</div>
<div class="wi" style="top:612px"></div><div class="t wl" style="top:623px">Meeting</div>
<div class="a" style="left:636px;top:637px;width:9px;height:8px;background:repeating-linear-gradient(90deg,#a9c6ec 0 4px,#3b78c9 4px 5px)"></div><div class="t wl" style="top:648px">Workspace</div>
<div class="wi" style="top:664px;height:7px;background:#89ade0"></div><div class="t wl" style="top:674px">Contacts</div>
<div class="t" style="left:635px;top:688px;font-size:6px;color:#cfe0f5">···</div><div class="t wl" style="top:698px">More</div>
<div class="a" style="left:636px;top:751px;width:9px;height:10px;border-radius:4px 4px 0 0;background:#a9c6ec"></div>
<div class="a" style="left:640px;top:748px;width:6px;height:6px;border-radius:50%;background:#ef4a42"></div>
<div class="a" style="left:661px;top:486px;width:79px;height:14px;background:#e2e2e2"></div>
<div class="t" style="left:667px;top:490px;font-size:5.500px;color:#999">⚲ &nbsp;Search</div>
<div class="a" style="left:744px;top:486px;width:14px;height:14px;background:#e2e2e2"></div><div class="a" style="left:748px;top:492.500px;width:6px;height:1px;background:#333"></div>

<div class="a" style="left:661px;top:589px;width:97px;height:1px;background:#e0e0e0"></div><div class="a" style="left:661px;top:674px;width:97px;height:1px;background:#e0e0e0"></div><div class="a" style="left:661px;top:702px;width:97px;height:1px;background:#e0e0e0"></div>

<div class="av" style="left:661px;top:510px;background:#fcb719;border-radius:2px"></div><svg class="a" style="left:664px;top:513px" width="12" height="12"><path d="M1 4h2v5H1zM4 4l6-2v7L4 8z" fill="#fff"/></svg>
<div class="t wn" style="left:684px;top:512px">Announcement</div><div class="t ws" style="left:684px;top:521px">本周最新入选!</div>
<div class="av" style="left:661px;top:538px;background:linear-gradient(180deg,#d9c0a0,#8a6a48 60%,#3a2a1a)"></div>
<div class="t wn" style="left:684px;top:540px">Institute</div><div class="t ws" style="left:684px;top:549px">前景金融财务报...</div><div class="t wt" style="right:1162px;top:549px">Yesterday</div>
<div class="av" style="left:661px;top:566px;background:#fff"></div><div class="a" style="left:665px;top:572px;width:10px;height:6px;background:#e88a90"></div>
<div class="t wn" style="left:684px;top:568px">Little</div><div class="t ws" style="left:684px;top:577px">信息了</div><div class="t wt" style="right:1162px;top:577px">Yesterday</div>
<div class="av" style="left:661px;top:595px;background:linear-gradient(135deg,#9ab8e0,#2a4a90 55%,#e8e8f0)"></div>
<div class="t wn" style="left:684px;top:597px">Jacky Ho</div><div class="t ws" style="left:684px;top:606px">[图片]</div><div class="t wt" style="right:1162px;top:606px">Yesterday</div>
<div class="av" style="left:661px;top:623px;background:linear-gradient(90deg,#4a3a30,#b49080 50%,#3a3028)"></div>
<div class="t wn" style="left:684px;top:625px">Man Ng</div><div class="t ws" style="left:684px;top:634px">[Audio]</div><div class="t wt" style="right:1162px;top:634px">Yesterday</div>
<div class="av" style="left:661px;top:651px;background:#fff"></div><svg class="a" style="left:663px;top:653px" width="14" height="14"><use href="#i-wc"/></svg>
<div class="t wn" style="left:684px;top:653px;color:#3a6a70">WeCom Team</div><div class="t ws" style="left:684px;top:662px">4.1.30 版本更新...</div><div class="t wt" style="right:1162px;top:662px">Yesterday</div>
<div class="av" style="left:661px;top:680px;background:linear-gradient(180deg,#bbb,#333 30%,#ccc 55%,#889)"></div>
<div class="t wn" style="left:684px;top:682px">WES WRS · OD...</div><div class="a" style="left:735px;top:681px;width:20px;height:7px;background:#d7e8f7"></div><div class="t" style="left:741px;top:683px;font-size:4px;color:#4a90d8">Ext</div><div class="t ws" style="left:684px;top:691px">入党培训开课啦, 入...</div><div class="t wt" style="right:1162px;top:691px">Wed</div>
<div class="av" style="left:661px;top:708px;background:radial-gradient(circle at 50% 55%,#a060d8 0,#4a2a70 30%,#16161c 60%)"></div>
<div class="t wn" style="left:684px;top:710px">Voice</div><div class="t ws" style="left:684px;top:719px">Ozhi aminid 已添加...</div><div class="t wt" style="right:1162px;top:719px">Tues</div>
<div class="av" style="left:661px;top:736px;background:#fcb719;border-radius:2px"></div><div class="a" style="left:665px;top:740px;width:9px;height:10px;background:#fff"></div>
<div class="t wn" style="left:684px;top:738px">Industry News</div><div class="t ws" style="left:684px;top:747px">需要了解 资讯 go...</div><div class="t wt" style="right:1162px;top:747px">09/19</div>
<svg class="a" style="left:893px;top:604px" width="50" height="46" viewBox="0 0 50 46"><path d="M40 22C40 10 31 2 20 2 9 2 2 10 2 20c0 7 4 13 9 16l-1 6 8-4c3 .8 6 .8 9 0" fill="none" stroke="#e6e6e6" stroke-width="3"/><circle cx="39" cy="24" r="3" fill="#e6e6e6"/><circle cx="31" cy="32" r="3" fill="#e6e6e6"/><circle cx="47" cy="32" r="3" fill="#e6e6e6"/><circle cx="39" cy="40" r="3" fill="#e6e6e6"/><path d="M37 26l-4 4M41 26l4 4M37 38l-4-4M41 38l4-4" stroke="#e6e6e6" stroke-width="1.500"/></svg>
</div>
</div></div>

<!-- WeChat -->
<div class="card" style="left:1095px;top:437px;width:525px;height:331px"><div class="in" style="left:-1095px;top:-437px">
<svg class="a" style="left:1105px;top:446px" width="17" height="17"><use href="#i-wx"/></svg>
<div class="t ti2" style="left:1130px;color:#333">微信</div>
<div class="b">
<div class="a" style="left:1119px;top:476px;width:501px;height:292px;background:#f5f5f5"></div>
<div class="a" style="left:1095px;top:476px;width:24px;height:292px;background:#2e2e2e"></div>
<div class="a" style="left:1099px;top:492px;width:16px;height:17px;background:#f3bb8a"></div><div class="a" style="left:1103px;top:496px;width:8px;height:9px;background:#a05f3a;border-radius:3px"></div>
<div class="a" style="left:1103px;top:521px;width:8px;height:8px;border-radius:50%;background:#08c25e"></div>
<div class="xi" style="top:540px"></div><div class="xi" style="top:558px"></div><div class="xi" style="top:577px;border-radius:1px"></div><div class="xi" style="top:596px"></div><div class="xi" style="top:615px"></div><div class="xi" style="top:634px"></div><div class="xi" style="top:653px"></div>
<div class="xi" style="top:714px"></div><div class="xi" style="top:733px;border-radius:1px;height:9px;width:6px;left:1104px"></div>
<div class="a" style="left:1103px;top:753px;width:7px;height:1px;background:#888;box-shadow:0 3px #888,0 6px #888"></div><div class="rd" style="left:1110px;top:750px;height:3px"></div>
<div class="a" style="left:1119px;top:504px;width:102px;height:145px;background:#e6e4e0"></div>
<div class="a" style="left:1119px;top:649px;width:102px;height:119px;background:linear-gradient(180deg,#e2e2e2,#e0e0e0 80%,#ebebe9)"></div>
<div class="a" style="left:1125px;top:487px;width:75px;height:12px;border-radius:2px;background:#e2e2e2"></div><div class="t" style="left:1128px;top:490px;font-size:5px;color:#999">⚲ 搜索</div>
<div class="a" style="left:1205px;top:487px;width:11px;height:12px;border-radius:2px;background:#e2e2e2"></div><div class="t" style="left:1209px;top:490px;font-size:6px;color:#444">+</div>
<div class="a" style="left:1221px;top:476px;width:1px;height:292px;background:#d4d4d4"></div>

<div class="av" style="left:1125px;top:510px;background:#2ea64a"></div><div class="a" style="left:1130px;top:516px;width:8px;height:6px;background:#fff"></div>
<div class="t xn" style="top:514px">文件传输助手</div><div class="t xs" style="top:524px">[文件]</div><div class="t xt" style="right:706px;top:514px">4:07 PM</div>
<div class="av" style="left:1125px;top:539px;background:linear-gradient(180deg,#e8e0d8,#d0c8c0 55%,#222 85%)"></div>
<div class="t xn" style="top:543px">黄绿蒂</div><div class="t xs" style="top:553px">[图片]</div><div class="t xt" style="right:706px;top:543px">5:10 PM</div>
<div class="av" style="left:1125px;top:568px;background:linear-gradient(180deg,#f3b98a 70%,#d8452a)"></div>
<div class="t xn" style="top:572px">甘</div><div class="t xs" style="top:582px;left:1150px">[Mason Wang]: 好的...</div><div class="t xt" style="right:706px;top:572px">4:30 PM</div>
<div class="av" style="left:1125px;top:597px;background:repeating-linear-gradient(90deg,#b8b0a0 0 5px,#ddd 5px 6px)"></div>
<div class="t xn" style="top:601px">第二期小组讨论群</div><div class="t xs" style="top:611px">Mon Toasts in the ...</div><div class="t xt" style="right:706px;top:601px">昨天</div>
<div class="av" style="left:1125px;top:626px;background:#e8e8e8"></div><div class="a" style="left:1130px;top:631px;width:8px;height:9px;background:#1c2c4c"></div>
<div class="t xn" style="top:630px">小米</div><div class="t xs" style="top:640px">30分钟 火热...</div><div class="t xt" style="right:706px;top:630px">24/9/21</div>
<div class="av" style="left:1125px;top:655px;background:repeating-linear-gradient(90deg,#a89070 0 5px,#ddd 5px 6px)"></div><div class="rd" style="left:1140px;top:652px"></div>
<div class="t xn" style="top:659px">应用了公众号</div><div class="t xs" style="top:669px">[14条] Non... 公众号</div><div class="t xt" style="right:706px;top:659px">5:15 PM</div>
<div class="av" style="left:1125px;top:684px;background:#1a88ee"></div><div class="a" style="left:1129px;top:687px;width:10px;height:12px;background:#fff"></div><div class="rd" style="left:1140px;top:681px"></div>
<div class="t xn" style="top:688px">订阅号</div><div class="t xs" style="top:698px">得长之家: 华为真正...</div><div class="t xt" style="right:706px;top:688px">5:00 PM</div>
<div class="av" style="left:1125px;top:713px;background:#fff"></div><div class="a" style="left:1127px;top:721px;width:12px;height:3px;background:#3aa860;transform:rotate(-15deg)"></div><div class="rd" style="left:1140px;top:710px"></div>
<div class="t xn" style="top:717px">微信公众 J.X.</div><div class="t xs" style="top:727px">薄荷的今日公告群</div><div class="t xt" style="right:706px;top:717px">3:01 PM</div>
<div class="av" style="left:1125px;top:742px;background:linear-gradient(135deg,#1c2030,#c89040 60%,#2a2218)"></div>
<div class="t xn" style="top:746px">Victor <span style="color:#3a80c8">●</span></div><div class="t xs" style="top:756px">[动画]</div><div class="t xt" style="right:706px;top:746px">1:05 PM</div>
<div class="t" style="left:1565px;top:479px;font-size:5px;color:#444">⚲</div><div class="t" style="left:1581px;top:480px;font-size:5px;color:#444">–</div><div class="a" style="left:1597px;top:480px;width:4px;height:4px;border:1px solid #444"></div><div class="t" style="left:1610px;top:479px;font-size:6px;color:#444">×</div>
<svg class="a" style="left:1399px;top:604px" width="43" height="38" viewBox="0 0 43 38"><path d="M17 1C8 1 1 7 1 15c0 4 2 8 6 11l-1 5 6-3c2 .6 3 .7 5 .7a14 14 0 0 1 16-16C31 6 25 1 17 1z" fill="#e8e8e8"/><ellipse cx="30" cy="26" rx="13" ry="11" fill="#e8e8e8"/><circle cx="12" cy="11" r="2" fill="#f0f0f0"/><circle cx="22" cy="11" r="2" fill="#f0f0f0"/><circle cx="26" cy="24" r="1.600" fill="#f0f0f0"/><circle cx="35" cy="24" r="1.600" fill="#f0f0f0"/></svg>
</div>
</div></div>

<!-- Desktops strip -->
<div class="a" style="left:9px;top:849px;width:1902px;height:174px;border-radius:6px;background:#d9d9d9"></div>
<div class="a" style="left:466px;top:855px;width:242px;height:162px;border-radius:4px;background:#ececec;border-right:1px solid #d0d0d0;border-bottom:1px solid #d0d0d0"></div>
<div class="t" style="left:476px;top:865px;font-size:12px">左</div>
<div class="t" style="left:724px;top:864px;font-size:12px">中</div>
<div class="t" style="left:972px;top:865px;font-size:12px">右</div>
<div class="t" style="left:1221px;top:863px;font-size:12.300px">New desktop</div>
<div class="a" style="left:571px;top:1014px;width:32px;height:3px;border-radius:2px;background:#0a68c8"></div>

<div class="thumb" style="left:477px;width:220px;background:#f8f8f8"><div class="in b" style="left:-477px;top:-886px">
<div class="a" style="left:489px;top:892px;width:197px;height:106px;background:#fff"></div>
<div class="a" style="left:489px;top:892px;width:197px;height:4px;background:#eaeaea"></div>
<div class="a" style="left:490px;top:893px;width:30px;height:2px;background:#aaa"></div>
<div class="a" style="left:489px;top:896px;width:197px;height:2px;background:repeating-linear-gradient(90deg,#ddd 0 8px,#f2f2f2 8px 12px)"></div>
<div class="a" style="left:489px;top:899px;width:197px;height:2px;background:repeating-linear-gradient(90deg,#e4c888 0 2px,#c4c4c4 2px 10px,#fff 10px 12px)"></div>
<div class="a" style="left:506px;top:905px;width:21px;height:3px;background:repeating-linear-gradient(90deg,#ccc 0 3px,#fff 3px 5px)"></div>
<div class="a" style="left:506px;top:912px;width:21px;height:64px;background:#000"></div>
<div class="a" style="left:507px;top:914px;width:3px;height:3px;background:#e8a820"></div><div class="a" style="left:512px;top:914px;width:3px;height:3px;background:#ddd"></div><div class="a" style="left:507px;top:921px;width:3px;height:3px;background:#3a8ad0"></div><div class="a" style="left:512px;top:921px;width:3px;height:3px;background:#3a70c0"></div><div class="a" style="left:507px;top:928px;width:3px;height:3px;background:#38b4d8"></div><div class="a" style="left:512px;top:928px;width:3px;height:3px;background:#90c8a0"></div><div class="a" style="left:507px;top:934px;width:3px;height:3px;background:#cde"></div><div class="a" style="left:512px;top:934px;width:3px;height:3px;background:#d8552a"></div><div class="a" style="left:507px;top:940px;width:3px;height:3px;background:#ddd"></div>
<div class="a" style="left:506px;top:976px;width:21px;height:4px;background:#ccc"></div>
<div class="a" style="left:505px;top:984px;width:22px;height:3px;background:#eee"></div>
<div class="a" style="left:505px;top:990px;width:8px;height:1px;background:#999"></div><div class="a" style="left:505px;top:994px;width:14px;height:1px;background:#bbb"></div>
<div class="a" style="left:658px;top:906px;width:18px;height:18px;background:#f2f2f2"></div>
<div class="a" style="left:684px;top:927px;width:1px;height:34px;background:#999"></div>
<div class="a" style="left:680px;top:930px;width:4px;height:4px;background:#555"></div>
<div class="a" style="left:680px;top:938px;width:5px;height:5px;border-radius:50%;background:#f5b8cc"></div>
<svg class="a" style="left:527px;top:903px;box-shadow:0 3px 7px rgba(0,0,0,.22)" width="131" height="85"><use href="#mini"/></svg>
</div></div>

<div class="thumb" style="left:725px;width:220px"><div class="in b" style="left:-725px;top:-886px">
<div class="a" style="left:812px;top:892px;width:97px;height:94px;background:#fff;border-right:1px solid #888;border-top:1px solid #ddd"></div>
<div class="a" style="left:812px;top:892px;width:97px;height:3px;background:#e4e4e4"></div><div class="a" style="left:815px;top:897px;width:90px;height:3px;background:#f4f4f4"></div><div class="a" style="left:818px;top:897.500px;width:12px;height:2px;background:#ccc"></div><div class="a" style="left:899px;top:897px;width:7px;height:3px;background:linear-gradient(90deg,#888 50%,#5a9ad8 50%)"></div>
<svg class="a" style="left:774px;top:903px;box-shadow:0 3px 7px rgba(0,0,0,.22)" width="133" height="85"><use href="#mini"/></svg>
</div></div>

<div class="thumb" style="left:973px;width:220px"><div class="in b" style="left:-973px;top:-886px">
<div class="a" style="left:1060px;top:892px;width:97px;height:94px;background:#fff;border-right:1px solid #888;border-top:1px solid #ddd"></div>
<div class="a" style="left:1060px;top:892px;width:97px;height:3px;background:#e4e4e4"></div><div class="a" style="left:1063px;top:897px;width:90px;height:3px;background:#f4f4f4"></div><div class="a" style="left:1066px;top:897.500px;width:12px;height:2px;background:#ccc"></div><div class="a" style="left:1147px;top:897px;width:7px;height:3px;background:linear-gradient(90deg,#888 50%,#5a9ad8 50%)"></div>
<svg class="a" style="left:1022px;top:903px;box-shadow:0 3px 7px rgba(0,0,0,.22)" width="133" height="85"><use href="#mini"/></svg>
</div></div>

<div class="a" style="left:1221px;top:886px;width:220px;height:123px;background:#fff;border-radius:4px;border:1px solid #ededed"></div>
<svg class="a" style="left:1324px;top:941px" width="13" height="13"><path d="M6.500 0v13M0 6.500h13" stroke="#222" stroke-width="1"/></svg>

<!-- Taskbar -->
<div class="a" style="left:0;top:1032px;width:1920px;height:40px;background:#e2e2e2;border-top:1px solid #c8c8c8"></div>
<svg class="a" style="left:20px;top:1041px" width="26" height="27" viewBox="0 0 26 27"><path d="M14 3C7 4 1 9 1 15c0 6 4 10 9 10 5 0 8-4 8-8-6 1-9-3-8-8 .5-3 2-5 4-6z" fill="#f0a21e"/><path d="M2 18c1 5 5 8 9 7 3-.6 6-3 7-6l-6 1c-4 .6-8-.2-10-2z" fill="#f06a1a"/><ellipse cx="17" cy="18" rx="7.500" ry="4.500" fill="#a8d0f2"/><ellipse cx="15" cy="15.500" rx="4.500" ry="4" fill="#c6e0f7"/></svg>
<div class="a" style="left:30px;top:1039px;width:16px;height:16px;border-radius:50%;background:#c42b1c;color:#fff;font-size:11px;line-height:16px;text-align:center">1</div>
<div class="t" style="left:50px;top:1042px;font-size:12px;color:#1a1a1a">29°C</div>
<div class="t" style="left:50px;top:1058px;font-size:12.200px;color:#5a5a5a">Mostly sunny</div>

<svg class="a" style="left:751px;top:1045px" width="23" height="23"><use href="#i-win"/></svg>
<svg class="a" style="left:795px;top:1044px" width="24" height="24"><use href="#i-cop"/></svg>
<svg class="a" style="left:839px;top:1044px" width="24" height="24"><use href="#i-gpt"/></svg>
<svg class="a" style="left:883px;top:1045px" width="24" height="22"><use href="#i-folder"/></svg>
<svg class="a" style="left:927px;top:1047px" width="24" height="18"><use href="#i-todo"/></svg>
<svg class="a" style="left:971px;top:1044px" width="24" height="24"><use href="#i-edge"/></svg>
<svg class="a" style="left:1015px;top:1043px" width="24" height="24"><use href="#i-wx"/></svg>
<svg class="a" style="left:1059px;top:1044px" width="24" height="24"><use href="#i-qq"/></svg>
<svg class="a" style="left:1103px;top:1044px" width="24" height="24"><use href="#i-wc"/></svg>
<svg class="a" style="left:1147px;top:1047px" width="24" height="18"><use href="#i-cap"/></svg>
<div class="pip" style="left:848px"></div><div class="pip" style="left:980px"></div><div class="pip" style="left:1068px"></div><div class="pip" style="left:1112px"></div><div class="pip" style="left:1156px"></div>

<svg class="a" style="left:1539px;top:1052px" width="12" height="8"><path d="M1 7l5-5 5 5" fill="none" stroke="#222" stroke-width="1.300"/></svg>
<svg class="a" style="left:1569px;top:1047px" width="16" height="16"><use href="#i-wx"/></svg>
<svg class="a" style="left:1601px;top:1047px" width="16" height="18" viewBox="0 0 16 18"><path d="M1 17V7a7 7 0 0 1 14 0v10l-2.500-1.500L10 17l-2-1.500L6 17l-2.500-1.500z" fill="#fff" stroke="#ddd" stroke-width=".5"/><path d="M5 7h6c0 3-1 5-3 5S5 10 5 7z" fill="#e6189c"/></svg>
<svg class="a" style="left:1633px;top:1048px" width="16" height="16" viewBox="0 0 16 16"><circle cx="8" cy="8" r="8" fill="#f2733a"/><path d="M3.500 4l2.500 2h4l2.500-2v6c0 2-2 3.500-4.500 3.500S3.500 12 3.500 10z" fill="#fff"/><circle cx="6" cy="9" r=".8" fill="#f2733a"/><circle cx="10" cy="9" r=".8" fill="#f2733a"/></svg>
<div class="t" style="left:1666px;top:1049px;font-size:14px;color:#222">中</div>
<svg class="a" style="left:1703px;top:1048px" width="16" height="16" viewBox="0 0 16 16"><circle cx="8" cy="8" r="8" fill="#0fb070"/><path d="M6 13l1.500-8.500H11c1.500 0 2 1.200 1.500 2.500S11 9 9.500 9H4.500M3.500 6.800H9" fill="none" stroke="#fff" stroke-width="1.500"/></svg>
<svg class="a" style="left:1741px;top:1049px" width="16" height="14" viewBox="0 0 16 14"><path d="M.8 4.500a10 10 0 0 1 14.400 0M3 7a7 7 0 0 1 10 0M5.200 9.500a3.800 3.800 0 0 1 5.600 0" fill="none" stroke="#222" stroke-width="1.100"/><circle cx="8" cy="12" r="1.200" fill="#222"/></svg>
<svg class="a" style="left:1765px;top:1049px" width="16" height="14" viewBox="0 0 16 14"><path d="M1 5h2.500L7 1.800v10.400L3.500 9H1z" fill="none" stroke="#222" stroke-width="1.100"/><path d="M9.500 4.500a3.500 3.500 0 0 1 0 5" fill="none" stroke="#222" stroke-width="1.100"/><path d="M11.500 2.500a6 6 0 0 1 0 9M13.500 1a8 8 0 0 1 0 12" fill="none" stroke="#999" stroke-width="1"/></svg>
<svg class="a" style="left:1788px;top:1047px" width="18" height="16" viewBox="0 0 18 16"><rect x="1" y="5" width="14" height="9" rx="1.500" fill="none" stroke="#222" stroke-width="1.100"/><rect x="3" y="7" width="10" height="5" fill="#222"/><rect x="15.500" y="8" width="2" height="3" fill="#222"/><path d="M5.500 0L3 5h2.500L4 9.500" fill="#e2e2e2" stroke="#222" stroke-width=".9"/></svg>
<div class="t" style="right:43px;top:1042px;font-size:12px;color:#1a1a1a">5:22 PM</div>
<div class="t" style="right:43px;top:1058px;font-size:12px;color:#1a1a1a">9/27/2024</div>
<svg class="a" style="left:1885px;top:1048px" width="14" height="16" viewBox="0 0 14 16"><path d="M2 11.500V7a5 5 0 0 1 10 0v4.500l1.300 1.500H.7z" fill="none" stroke="#222" stroke-width="1.100" stroke-linejoin="round"/><path d="M5 13.500a2 2 0 0 0 4 0" fill="none" stroke="#222" stroke-width="1.100"/></svg>
</body></html>
